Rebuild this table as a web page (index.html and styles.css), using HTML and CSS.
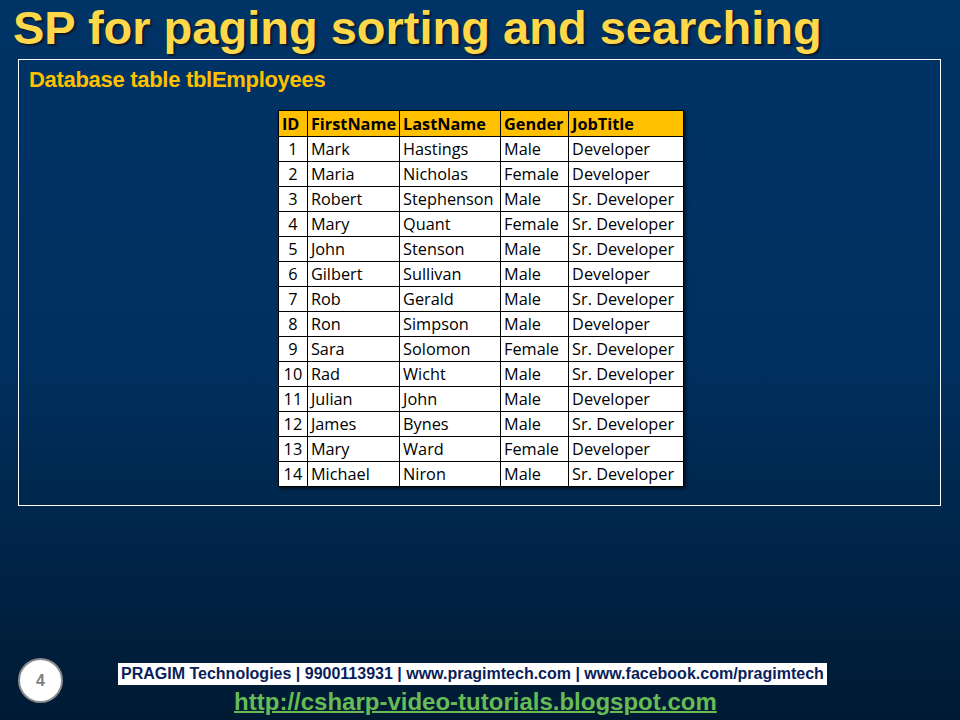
FILE: index.html
```html
<!DOCTYPE html>
<html>
<head>
<meta charset="utf-8">
<link rel="stylesheet" href="styles.css">
</head>
<body>
<div class="slide">
  <h1 class="title">SP for paging sorting and searching</h1>
  <div class="box">
    <div class="subtitle">Database table tblEmployees</div>
    <table class="emp">
      <thead>
        <tr><th class="c-id">ID</th><th class="c-fn">FirstName</th><th class="c-ln">LastName</th><th class="c-g">Gender</th><th class="c-jt">JobTitle</th></tr>
      </thead>
      <tbody>
        <tr><td class="num">1</td><td>Mark</td><td>Hastings</td><td>Male</td><td>Developer</td></tr>
        <tr><td class="num">2</td><td>Maria</td><td>Nicholas</td><td>Female</td><td>Developer</td></tr>
        <tr><td class="num">3</td><td>Robert</td><td>Stephenson</td><td>Male</td><td>Sr. Developer</td></tr>
        <tr><td class="num">4</td><td>Mary</td><td>Quant</td><td>Female</td><td>Sr. Developer</td></tr>
        <tr><td class="num">5</td><td>John</td><td>Stenson</td><td>Male</td><td>Sr. Developer</td></tr>
        <tr><td class="num">6</td><td>Gilbert</td><td>Sullivan</td><td>Male</td><td>Developer</td></tr>
        <tr><td class="num">7</td><td>Rob</td><td>Gerald</td><td>Male</td><td>Sr. Developer</td></tr>
        <tr><td class="num">8</td><td>Ron</td><td>Simpson</td><td>Male</td><td>Developer</td></tr>
        <tr><td class="num">9</td><td>Sara</td><td>Solomon</td><td>Female</td><td>Sr. Developer</td></tr>
        <tr><td class="num">10</td><td>Rad</td><td>Wicht</td><td>Male</td><td>Sr. Developer</td></tr>
        <tr><td class="num">11</td><td>Julian</td><td>John</td><td>Male</td><td>Developer</td></tr>
        <tr><td class="num">12</td><td>James</td><td>Bynes</td><td>Male</td><td>Sr. Developer</td></tr>
        <tr><td class="num">13</td><td>Mary</td><td>Ward</td><td>Female</td><td>Developer</td></tr>
        <tr><td class="num">14</td><td>Michael</td><td>Niron</td><td>Male</td><td>Sr. Developer</td></tr>
      </tbody>
    </table>
  </div>
  <div class="footer">
    <div class="pagenum">4</div>
    <div class="footer-center">
      <div class="banner">PRAGIM Technologies | 9900113931 | www.pragimtech.com | www.facebook.com/pragimtech</div>
      <div class="link">http://csharp-video-tutorials.blogspot.com</div>
    </div>
  </div>
</div>
</body>
</html>
```

FILE: styles.css
```css
html, body {
  margin: 0;
  padding: 0;
}
body {
  width: 960px;
  height: 720px;
  overflow: hidden;
}
.slide {
  width: 960px;
  height: 720px;
  background: linear-gradient(to bottom, #003366 0%, #00305f 50%, #001a33 100%);
  display: flex;
  flex-direction: column;
  box-sizing: border-box;
}
.title {
  margin: 0;
  padding: 3px 0 0 13px;
  height: 55px;
  box-sizing: border-box;
  font-family: "Liberation Sans", Arial, sans-serif;
  font-weight: bold;
  font-size: 47px;
  line-height: 50px;
  color: #ffd84a;
  text-shadow: 2px 2px 2px #0a1a2a;
  white-space: nowrap;
}
.box {
  margin: 4px 19px 0 18px;
  height: 447px;
  box-sizing: border-box;
  border: 1px solid #ffffff;
  display: flex;
  flex-direction: column;
  align-items: center;
}
.subtitle {
  align-self: flex-start;
  margin: 7px 0 0 10px;
  font-family: "Liberation Sans", Arial, sans-serif;
  font-weight: bold;
  font-size: 22px;
  letter-spacing: -0.3px;
  line-height: 26px;
  color: #ffc000;
}
.emp {
  margin-top: 17px;
  margin-left: 3px;
  border-collapse: collapse;
  background: #ffffff;
  font-family: "Open Sans", Lato, sans-serif;
  font-size: 16.3px;
  color: #000;
  box-shadow: 2px 2px 3px rgba(0,0,0,0.6);
}
.emp th, .emp td {
  border: 1px solid #000;
  height: 25px;
  padding: 0 3px 0 3px;
  text-align: left;
  white-space: nowrap;
  line-height: 24px;
  box-sizing: border-box;
}
.emp th {
  background: #ffc000;
  font-weight: bold;
  height: 26px;
}
.emp td.num {
  text-align: center;
  padding: 0 1px;
}
.c-id { width: 29px; }
.c-fn { width: 92px; }
.c-ln { width: 101px; }
.c-g { width: 68px; }
.c-jt { width: 115px; }
.footer {
  flex: 1;
  display: flex;
  align-items: flex-start;
  padding-top: 152px;
  box-sizing: border-box;
}
.pagenum {
  margin-left: 18px;
  width: 45px;
  height: 45px;
  box-sizing: border-box;
  border-radius: 50%;
  background: #ffffff;
  border: 2px solid #8a8a8a;
  color: #808080;
  font-family: "Liberation Sans", Arial, sans-serif;
  font-weight: bold;
  font-size: 16px;
  display: flex;
  align-items: center;
  justify-content: center;
}
.footer-center {
  display: flex;
  flex-direction: column;
  align-items: center;
  margin-left: 55px;
  margin-top: 5px;
}
.banner {
  background: #ffffff;
  color: #0a1e5a;
  font-family: "Liberation Sans", Arial, sans-serif;
  font-weight: bold;
  font-size: 16px;
  line-height: 22px;
  padding: 0 3px;
  white-space: nowrap;
}
.link {
  margin-top: 3px;
  margin-left: 6px;
  color: #66bb55;
  font-family: "Liberation Sans", Arial, sans-serif;
  font-weight: bold;
  font-size: 24px;
  letter-spacing: 0;
  line-height: 28px;
  text-decoration: underline;
  text-decoration-thickness: 2px;
  white-space: nowrap;
}
```
